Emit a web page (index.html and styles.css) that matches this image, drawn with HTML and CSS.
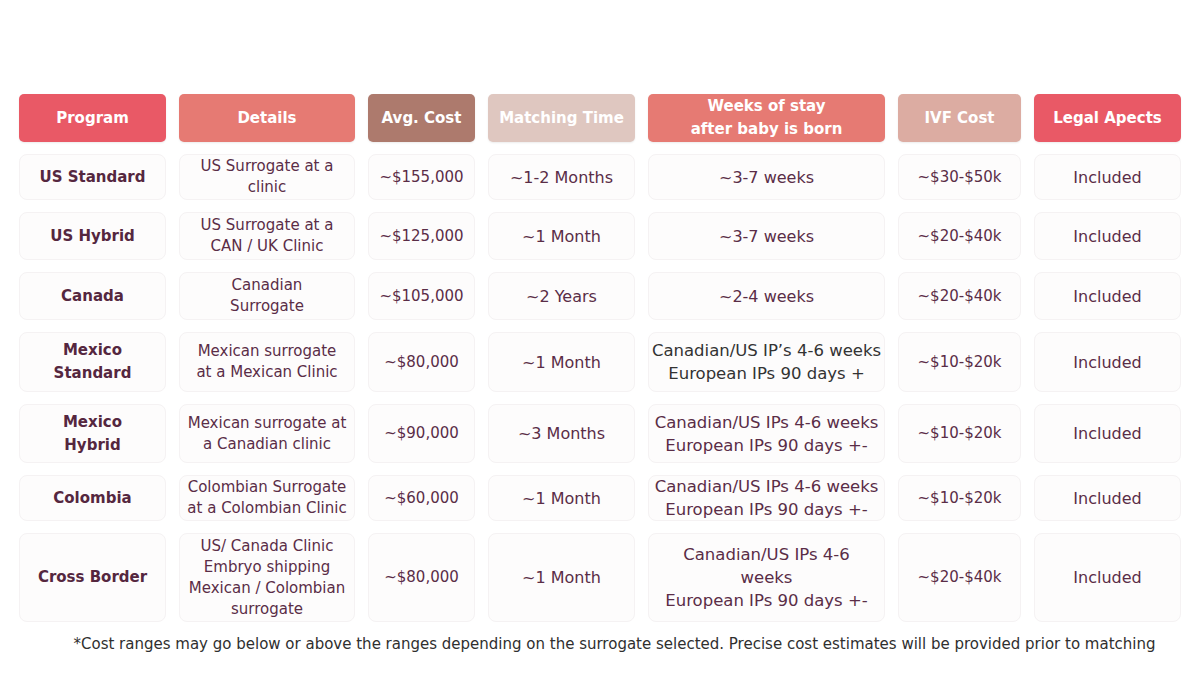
FILE: index.html
```html
<!DOCTYPE html>
<html>
<head>
<meta charset="utf-8">
<link rel="stylesheet" href="styles.css">
</head>
<body>
<main class="page">
  <div class="table">
    <div class="hd c-red">Program</div>
    <div class="hd c-salmon">Details</div>
    <div class="hd c-brown">Avg. Cost</div>
    <div class="hd c-blush">Matching Time</div>
    <div class="hd c-salmon">Weeks of stay<br>after baby is born</div>
    <div class="hd c-rose">IVF Cost</div>
    <div class="hd c-red">Legal Apects</div>

    <div class="cell prog">US Standard</div>
    <div class="cell det">US Surrogate at a<br>clinic</div>
    <div class="cell num">~$155,000</div>
    <div class="cell">~1-2 Months</div>
    <div class="cell">~3-7 weeks</div>
    <div class="cell num">~$30-$50k</div>
    <div class="cell">Included</div>

    <div class="cell prog">US Hybrid</div>
    <div class="cell det">US Surrogate at a<br>CAN / UK Clinic</div>
    <div class="cell num">~$125,000</div>
    <div class="cell">~1 Month</div>
    <div class="cell">~3-7 weeks</div>
    <div class="cell num">~$20-$40k</div>
    <div class="cell">Included</div>

    <div class="cell prog">Canada</div>
    <div class="cell det">Canadian<br>Surrogate</div>
    <div class="cell num">~$105,000</div>
    <div class="cell">~2 Years</div>
    <div class="cell">~2-4 weeks</div>
    <div class="cell num">~$20-$40k</div>
    <div class="cell">Included</div>

    <div class="cell prog">Mexico<br>Standard</div>
    <div class="cell det">Mexican surrogate<br>at a Mexican Clinic</div>
    <div class="cell num">~$80,000</div>
    <div class="cell">~1 Month</div>
    <div class="cell wk gray">Canadian/US IP’s 4-6 weeks<br>European IPs 90 days +</div>
    <div class="cell num">~$10-$20k</div>
    <div class="cell">Included</div>

    <div class="cell prog">Mexico<br>Hybrid</div>
    <div class="cell det">Mexican surrogate at<br>a Canadian clinic</div>
    <div class="cell num">~$90,000</div>
    <div class="cell">~3 Months</div>
    <div class="cell wk">Canadian/US IPs 4-6 weeks<br>European IPs 90 days +-</div>
    <div class="cell num">~$10-$20k</div>
    <div class="cell">Included</div>

    <div class="cell prog">Colombia</div>
    <div class="cell det">Colombian Surrogate<br>at a Colombian Clinic</div>
    <div class="cell num">~$60,000</div>
    <div class="cell">~1 Month</div>
    <div class="cell wk">Canadian/US IPs 4-6 weeks<br>European IPs 90 days +-</div>
    <div class="cell num">~$10-$20k</div>
    <div class="cell">Included</div>

    <div class="cell prog">Cross Border</div>
    <div class="cell det">US/ Canada Clinic<br>Embryo shipping<br>Mexican / Colombian<br>surrogate</div>
    <div class="cell num">~$80,000</div>
    <div class="cell">~1 Month</div>
    <div class="cell wk">Canadian/US IPs 4-6<br>weeks<br>European IPs 90 days +-</div>
    <div class="cell num">~$20-$40k</div>
    <div class="cell">Included</div>
  </div>
  <p class="note">*Cost ranges may go below or above the ranges depending on the surrogate selected. Precise cost estimates will be provided prior to matching</p>
</main>
</body>
</html>
```

FILE: styles.css
```css
html, body {
  margin: 0;
  padding: 0;
  background: #ffffff;
}

body {
  font-family: "DejaVu Sans", "Open Sans", sans-serif;
  color: #5a2d47;
}

.page {
  width: 1200px;
  height: 675px;
  padding-top: 94px;
  box-sizing: border-box;
}

.table {
  margin-left: 19px;
  display: grid;
  grid-template-columns: 147px 176px 107px 147px 237px 123px 147px;
  grid-template-rows: 48px 46px 48px 48px 60px 59px 46px 89px;
  column-gap: 13px;
  row-gap: 12px;
}

.hd {
  border-radius: 5px;
  color: #ffffff;
  font-size: 15px;
  font-weight: 600;
  display: flex;
  align-items: center;
  justify-content: center;
  text-align: center;
  line-height: 23px;
  box-shadow: 0 1px 2px rgba(0, 0, 0, 0.08);
}

.c-red { background: #e95966; }
.c-salmon { background: #e67a73; }
.c-brown { background: #ad7a6d; }
.c-blush { background: #dfc7c0; }
.c-rose { background: #dcaca2; }

.cell {
  background: #fdfcfc;
  border: 1px solid #f5f2f3;
  border-radius: 8px;
  display: flex;
  align-items: center;
  justify-content: center;
  text-align: center;
  font-size: 16px;
  line-height: 23px;
  color: #5a2d47;
}

.cell.num {
  font-size: 15px;
}

.cell.prog {
  font-weight: 700;
  font-size: 15px;
  color: #55273f;
}

.cell.det {
  font-size: 15px;
  line-height: 21px;
}

.cell.wk {
  font-size: 16.5px;
  line-height: 23px;
  white-space: nowrap;
}

.cell.gray {
  color: #333333;
}

.note {
  margin: 13px 0 0 0;
  text-align: center;
  font-size: 15px;
  color: #2f2f2f;
  padding-left: 29px;
}
```
